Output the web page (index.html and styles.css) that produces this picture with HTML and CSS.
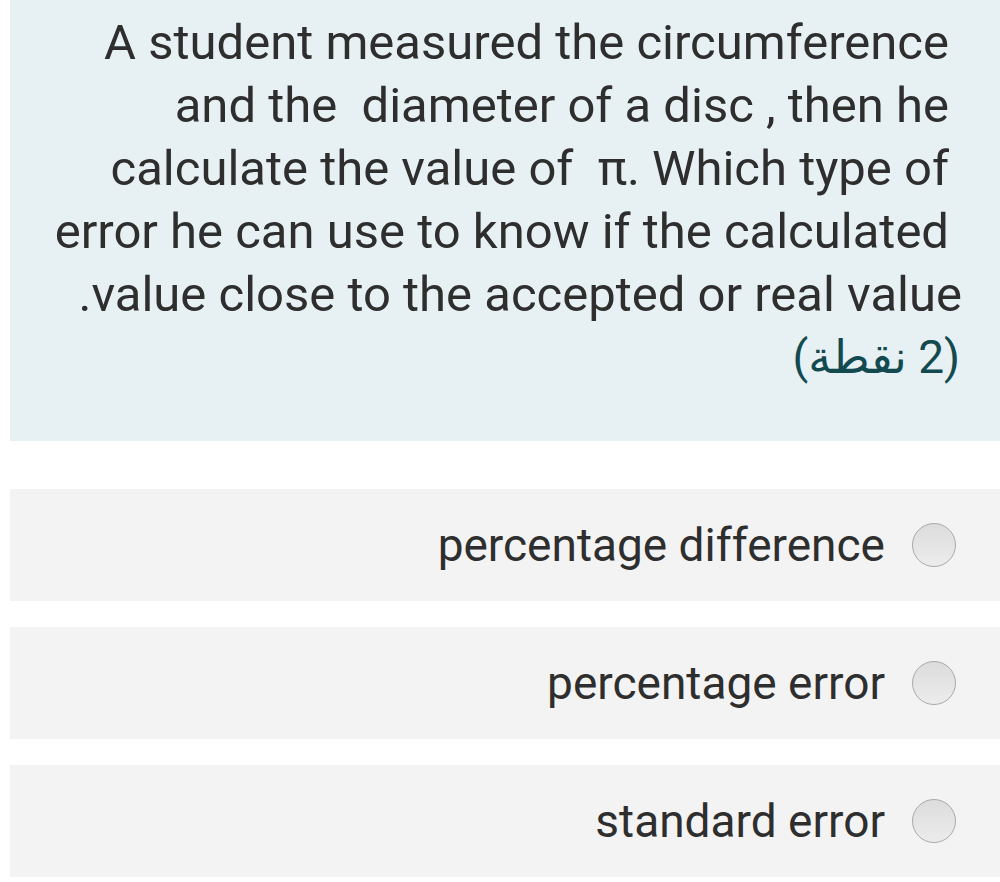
FILE: index.html
```html
<!DOCTYPE html>
<html>
<head>
<meta charset="utf-8">
<link rel="stylesheet" href="styles.css">
</head>
<body>
<div class="page">
  <div class="question" dir="rtl">
    <div class="qline pad">A student measured the circumference</div>
    <div class="qline pad">and the&nbsp; diameter of a disc , then he</div>
    <div class="qline pad">calculate the value of&nbsp; π. Which type of</div>
    <div class="qline pad">error he can use to know if the calculated</div>
    <div class="qline">value close to the accepted or real value.</div>
    <div class="qline points">(2 نقطة)</div>
  </div>
  <div class="options">
    <div class="option"><span class="label">percentage difference</span><span class="radio"></span></div>
    <div class="option"><span class="label">percentage error</span><span class="radio"></span></div>
    <div class="option"><span class="label">standard error</span><span class="radio"></span></div>
  </div>
</div>
</body>
</html>
```
FILE: styles.css
```css
html, body {
  margin: 0;
  padding: 0;
  background: #ffffff;
}
body {
  font-family: Roboto, "Noto Sans", "DejaVu Sans", sans-serif;
  color: #2e2e2e;
}
.page {
  width: 1000px;
  padding-left: 10px;
  box-sizing: border-box;
}
.question {
  background: #e7f0f3;
  height: 441px;
  box-sizing: border-box;
  padding: 11px 38px 0 20px;
  text-align: right;
  font-size: 49px;
  line-height: 63px;
}
.qline.pad {
  padding-right: 13px;
}
.points {
  color: #124a50;
  font-size: 46px;
  padding-right: 2px;
}
.options {
  margin-top: 48px;
  display: flex;
  flex-direction: column;
  gap: 26px;
}
.option {
  height: 112px;
  background: #f3f3f3;
  display: flex;
  justify-content: flex-end;
  align-items: center;
  padding-right: 44px;
  font-size: 46px;
}
.label {
  margin-right: 27px;
  line-height: 1;
}
.radio {
  width: 42px;
  height: 42px;
  border-radius: 50%;
  border: 1.5px solid #a9a9a9;
  background: linear-gradient(#dcdcdc, #ececec);
  flex: none;
}
```
